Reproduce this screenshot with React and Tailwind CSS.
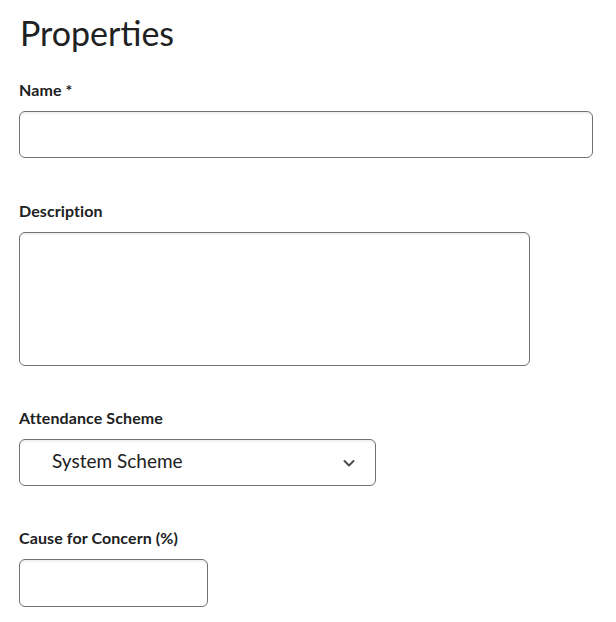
import React, { useState } from 'react';

const inputBox =
    'block border border-[#6e7376] rounded-[6px] bg-white shadow-[inset_0_2px_0_0_rgba(181,189,194,0.2)] outline-none';

const Label = ({ children }) => (
    <div className="text-[16px] font-bold leading-[19px] text-[#202122] mb-[12px] tracking-[0.1px]">{children}</div>
);

export default function App() {
    const [name, setName] = useState('');
    const [desc, setDesc] = useState('');
    const [concern, setConcern] = useState('');

    return (
        <div className="min-h-screen bg-white pl-[19px] pt-[12px] font-['Lato','Noto_Sans',sans-serif] text-[#202122]">
            <h1 className="text-[34px] leading-[42px] font-normal ml-[1px]">Properties</h1>

            {/* Name */}
            <div className="mt-[26px]">
                <Label>Name *</Label>
                <input
                    value={name}
                    onChange={(e) => setName(e.target.value)}
                    className={`${inputBox} w-[574px] h-[47px] px-3`}
                />
            </div>

            {/* Description */}
            <div className="mt-[43px]">
                <Label>Description</Label>
                <textarea
                    value={desc}
                    onChange={(e) => setDesc(e.target.value)}
                    className={`${inputBox} w-[511px] h-[134px] px-3 py-2 resize-none`}
                />
            </div>

            {/* Attendance Scheme */}
            <div className="mt-[42px]">
                <Label>Attendance Scheme</Label>
                <div className={`${inputBox} w-[357px] h-[47px] flex items-center justify-between pl-[32px] pr-[19px]`}>
                    <span className="text-[19px] text-[#202122] -mt-[2px]">System Scheme</span>
                    <svg width="14" height="14" viewBox="0 0 14 14" fill="none">
                        <path d="M2.5 5l4.5 4.5L11.5 5" stroke="#494c4e" strokeWidth="2" strokeLinecap="round" strokeLinejoin="round" />
                    </svg>
                </div>
            </div>

            {/* Cause for Concern */}
            <div className="mt-[42px]">
                <Label>Cause for Concern (%)</Label>
                <input
                    value={concern}
                    onChange={(e) => setConcern(e.target.value)}
                    className={`${inputBox} w-[189px] h-[48px] px-3`}
                />
            </div>
        </div>
    );
}
